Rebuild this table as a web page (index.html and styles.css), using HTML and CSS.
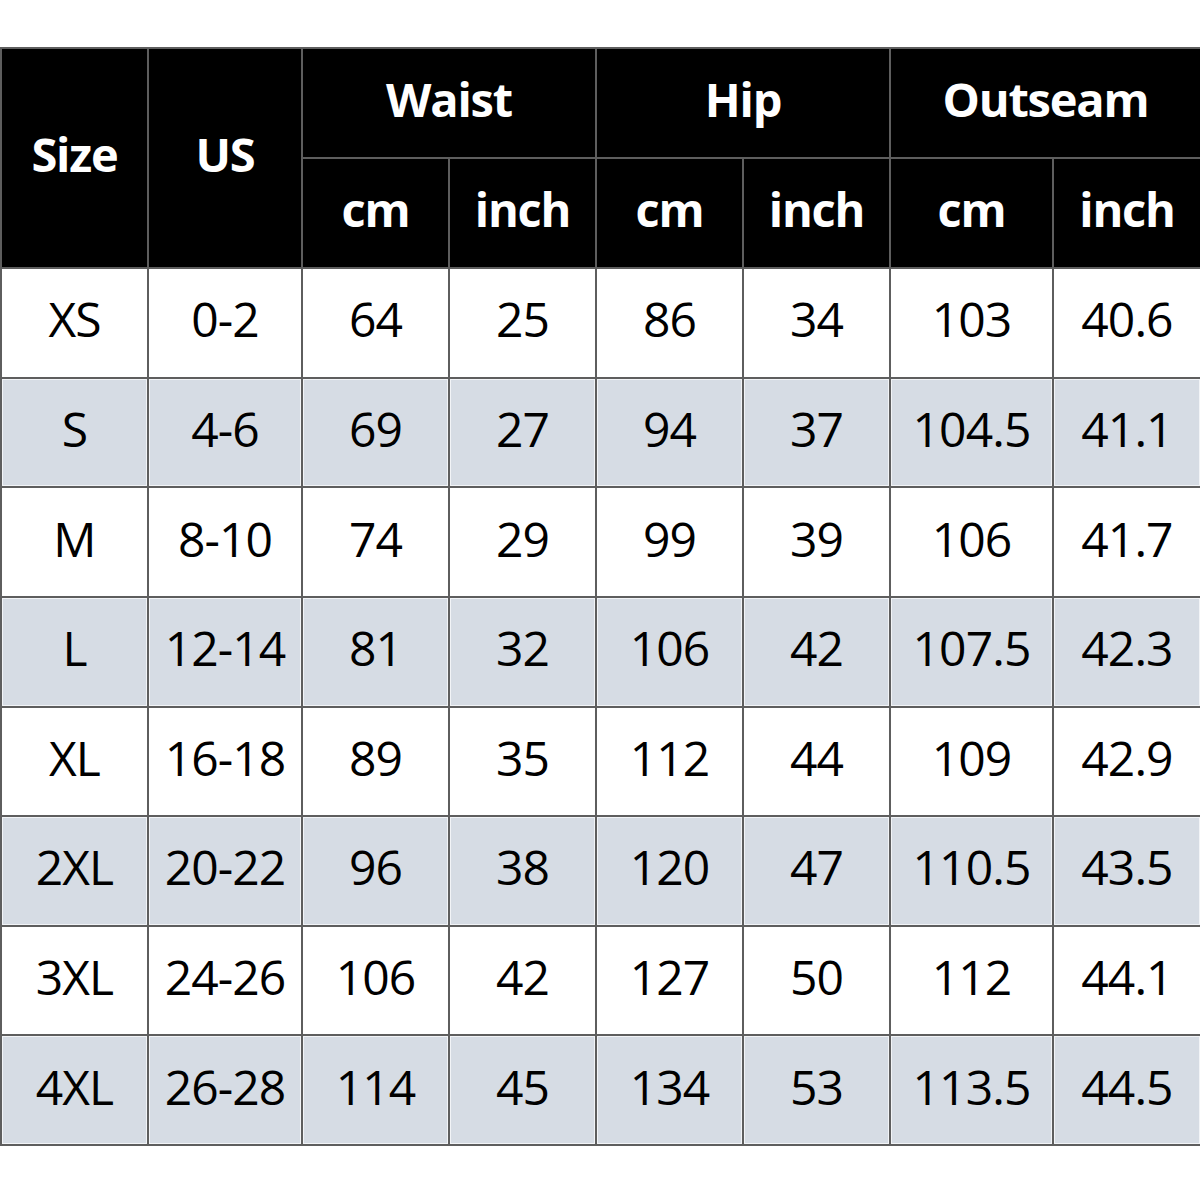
FILE: index.html
```html
<!DOCTYPE html>
<html>
<head>
<meta charset="utf-8">
<link rel="stylesheet" href="styles.css">
</head>
<body>
<div class="chart">
  <div class="hd size">Size</div>
  <div class="hd us">US</div>
  <div class="hd grp waist">Waist</div>
  <div class="hd grp hip">Hip</div>
  <div class="hd grp out">Outseam</div>
  <div class="hd">cm</div><div class="hd">inch</div>
  <div class="hd">cm</div><div class="hd">inch</div>
  <div class="hd">cm</div><div class="hd">inch</div>

  <div class="c">XS</div><div class="c">0-2</div><div class="c">64</div><div class="c">25</div><div class="c">86</div><div class="c">34</div><div class="c">103</div><div class="c">40.6</div>
  <div class="c s">S</div><div class="c s">4-6</div><div class="c s">69</div><div class="c s">27</div><div class="c s">94</div><div class="c s">37</div><div class="c s">104.5</div><div class="c s">41.1</div>
  <div class="c">M</div><div class="c">8-10</div><div class="c">74</div><div class="c">29</div><div class="c">99</div><div class="c">39</div><div class="c">106</div><div class="c">41.7</div>
  <div class="c s">L</div><div class="c s">12-14</div><div class="c s">81</div><div class="c s">32</div><div class="c s">106</div><div class="c s">42</div><div class="c s">107.5</div><div class="c s">42.3</div>
  <div class="c">XL</div><div class="c">16-18</div><div class="c">89</div><div class="c">35</div><div class="c">112</div><div class="c">44</div><div class="c">109</div><div class="c">42.9</div>
  <div class="c s">2XL</div><div class="c s">20-22</div><div class="c s">96</div><div class="c s">38</div><div class="c s">120</div><div class="c s">47</div><div class="c s">110.5</div><div class="c s">43.5</div>
  <div class="c">3XL</div><div class="c">24-26</div><div class="c">106</div><div class="c">42</div><div class="c">127</div><div class="c">50</div><div class="c">112</div><div class="c">44.1</div>
  <div class="c s">4XL</div><div class="c s">26-28</div><div class="c s">114</div><div class="c s">45</div><div class="c s">134</div><div class="c s">53</div><div class="c s">113.5</div><div class="c s">44.5</div>
</div>
</body>
</html>
```
FILE: styles.css
```css
html, body {
  margin: 0;
  padding: 0;
  background: #fff;
}
body {
  padding-top: 47px;
  font-family: "Open Sans", "Noto Sans", sans-serif;
}
.chart {
  width: 1200px;
  height: 1099px;
  box-sizing: border-box;
  padding: 2px 0 2px 2px;
  background: #5e5e5e;
  display: grid;
  gap: 2px;
  grid-template-columns: 145px 152px 145px 145px 145px 145px 161px 146px;
  grid-template-rows: 108px 108px repeat(8, 1fr);
}
.hd {
  background: #000;
  color: #fff;
  font-weight: 700;
  font-size: 47px;
  letter-spacing: -1.2px;
  display: flex;
  align-items: center;
  justify-content: center;
  padding-bottom: 8px;
  box-sizing: border-box;
}
.size { grid-row: 1 / 3; grid-column: 1; }
.us { grid-row: 1 / 3; grid-column: 2; }
.waist { grid-column: 3 / 5; }
.hip { grid-column: 5 / 7; }
.out { grid-column: 7 / 9; }
.c {
  background: #fff;
  color: #000;
  font-size: 48px;
  letter-spacing: -0.9px;
  display: flex;
  align-items: center;
  justify-content: center;
  padding-bottom: 8px;
  box-sizing: border-box;
}
.c.s {
  background: #d6dce4;
  box-shadow: inset 0 0 0 1px #f2f4f7;
}
```
